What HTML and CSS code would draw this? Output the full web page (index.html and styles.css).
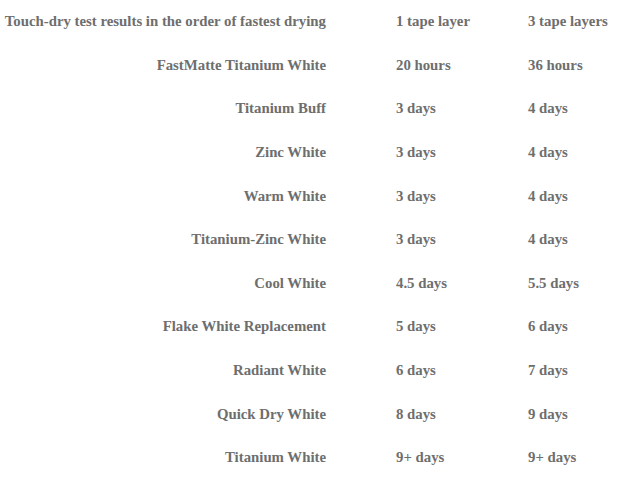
FILE: index.html
```html
<!DOCTYPE html>
<html>
<head>
<meta charset="utf-8">
<link rel="stylesheet" href="styles.css">
</head>
<body>
<div class="table">
  <div class="name">Touch-dry test results in the order of fastest drying</div><div class="val">1 tape layer</div><div class="val">3 tape layers</div>
  <div class="name">FastMatte Titanium White</div><div class="val">20 hours</div><div class="val">36 hours</div>
  <div class="name">Titanium Buff</div><div class="val">3 days</div><div class="val">4 days</div>
  <div class="name">Zinc White</div><div class="val">3 days</div><div class="val">4 days</div>
  <div class="name">Warm White</div><div class="val">3 days</div><div class="val">4 days</div>
  <div class="name">Titanium-Zinc White</div><div class="val">3 days</div><div class="val">4 days</div>
  <div class="name">Cool White</div><div class="val">4.5 days</div><div class="val">5.5 days</div>
  <div class="name">Flake White Replacement</div><div class="val">5 days</div><div class="val">6 days</div>
  <div class="name">Radiant White</div><div class="val">6 days</div><div class="val">7 days</div>
  <div class="name">Quick Dry White</div><div class="val">8 days</div><div class="val">9 days</div>
  <div class="name">Titanium White</div><div class="val">9+ days</div><div class="val">9+ days</div>
</div>
</body>
</html>
```
FILE: styles.css
```css
html, body {
  margin: 0;
  padding: 0;
  background: #ffffff;
}
.table {
  display: grid;
  grid-template-columns: 396px 132px 1fr;
  grid-auto-rows: 43.6px;
  font-family: "Liberation Serif", serif;
  font-weight: bold;
  font-size: 14.8px;
  color: #6e6e6e;
  white-space: nowrap;
}
.name, .val {
  display: flex;
  align-items: center;
}
.name {
  justify-content: flex-end;
  padding-right: 70px;
}
```
